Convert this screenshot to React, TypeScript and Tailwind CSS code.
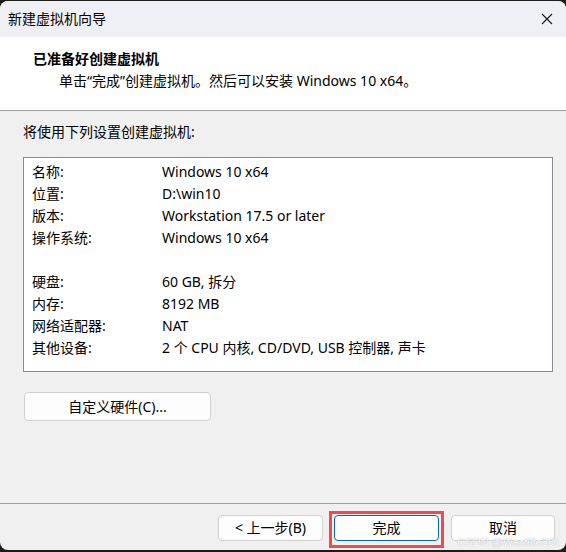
const rows: [string, string][] = [
  ['名称:', 'Windows 10 x64'],
  ['位置:', 'D:\\win10'],
  ['版本:', 'Workstation 17.5 or later'],
  ['操作系统:', 'Windows 10 x64'],
  ['', ''],
  ['硬盘:', '60 GB, 拆分'],
  ['内存:', '8192 MB'],
  ['网络适配器:', 'NAT'],
  ['其他设备:', '2 个 CPU 内核, CD/DVD, USB 控制器, 声卡'],
];

export default function App() {
  return (
    <div
      className="w-[566px] h-[552px] bg-[#1c1c1c] pt-[1px] text-[14px] text-black"
      style={{ fontFamily: '"Noto Sans", "Noto Sans CJK SC", sans-serif' }}
    >
      <div className="relative h-[549px] rounded-[8px] overflow-hidden bg-[#f0f0f0] flex flex-col">
        {/* Title bar */}
        <div className="h-[36px] bg-[#eff0f5] flex items-center justify-between pl-[8px] pr-[13px]">
          <span className="leading-[20px]">新建虚拟机向导</span>
          <svg width="12" height="12" viewBox="0 0 12 12" className="text-[#1a1a1a]">
            <path d="M1 1 L11 11 M11 1 L1 11" stroke="currentColor" strokeWidth="1.1" />
          </svg>
        </div>

        {/* Header */}
        <div className="h-[74px] bg-white pt-[11px] border-b border-[#a0a0a0]">
          <div className="pl-[33px] font-bold leading-[22px]">已准备好创建虚拟机</div>
          <div className="pl-[59px] leading-[22px]">单击“完成”创建虚拟机。然后可以安装 Windows 10 x64。</div>
        </div>

        {/* Body */}
        <div className="flex-1 pt-[10px] pl-[23px] pr-[13px]">
          <div className="leading-[22px]">将使用下列设置创建虚拟机:</div>
          <div className="mt-[14px] h-[215px] bg-white border border-[#868a92] pt-[3px] pl-[8px]">
            {rows.map(([k, v], i) => (
              <div key={i} className="flex h-[22px] leading-[22px]">
                <span className="w-[130px]">{k}</span>
                <span>{v}</span>
              </div>
            ))}
          </div>
          <button className="mt-[20px] ml-[1px] w-[187px] h-[29px] rounded-[4px] border border-[#d0d0d0] bg-[#fdfdfd] leading-[20px]">
            自定义硬件(C)...
          </button>
        </div>

        {/* Footer */}
        <div className="h-[47px] border-t border-[#a0a0a0] pt-[11px] pr-[11px] flex justify-end items-start">
          <button className="w-[105px] h-[26px] rounded-[4px] border border-[#d0d0d0] bg-[#fdfdfd] leading-[20px]">
            &lt; 上一步(B)
          </button>
          <div className="relative ml-[11px]">
            <button className="w-[105px] h-[26px] rounded-[4px] border border-[#0067c0] bg-[#fdfdfd] leading-[20px]">
              完成
            </button>
            <div className="absolute -left-[5px] -right-[5px] -top-[4px] -bottom-[7px] border-[3px] border-[#ec4b50]" />
          </div>
          <button className="ml-[12px] w-[104px] h-[26px] rounded-[4px] border border-[#d0d0d0] bg-[#fdfdfd] leading-[20px]">
            取消
          </button>
        </div>

        <div
          className="absolute right-[6px] bottom-[2px] text-[11px] leading-[12px] text-white"
          style={{ fontFamily: '"Liberation Sans", sans-serif', textShadow: '0 0 1px #9a9a9a' }}
        >
          CSDN @Westlife361
        </div>
      </div>
    </div>
  );
}
